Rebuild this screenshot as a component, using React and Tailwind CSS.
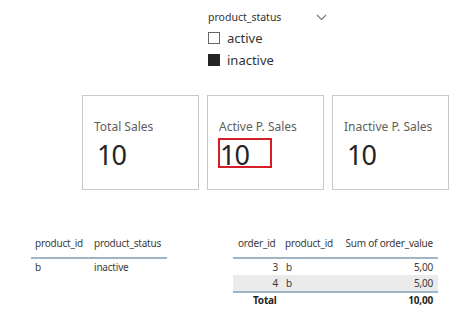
import React from 'react';

const font = { fontFamily: '"Noto Sans", "Open Sans", sans-serif' };

const cards = [
  { title: 'Total Sales', value: '10' },
  { title: 'Active P. Sales', value: '10', marked: true },
  { title: 'Inactive P. Sales', value: '10' },
];

const Chevron = () => (
  <svg width="11" height="7" viewBox="0 0 11 7">
    <path d="M1 1 L5.5 5.5 L10 1" fill="none" stroke="#777" strokeWidth="1.1" />
  </svg>
);

const Slicer = () => (
  <div className="ml-[208px] pt-[9px] w-[119px]">
    <div className="flex items-center justify-between h-[16px]">
      <span className="text-[10.5px] text-[#333] leading-none">product_status</span>
      <Chevron />
    </div>
    <div className="flex items-center gap-[7px] mt-[2px] h-[22px]">
      <span className="w-[12px] h-[12px] border border-[#666] bg-white" />
      <span className="text-[13px] text-[#333] leading-none">active</span>
    </div>
    <div className="flex items-center gap-[7px] h-[22px]">
      <span className="w-[12px] h-[12px] bg-[#252423]" />
      <span className="text-[13px] text-[#333] leading-none">inactive</span>
    </div>
  </div>
);

const Card = ({ title, value, marked }) => (
  <div className="w-[117px] h-[95px] border border-[#c8c8c8] bg-white pl-[11px] pt-[23px]">
    <div className="text-[12px] text-[#605e5c] leading-[16px]">{title}</div>
    <div className="mt-[3px]">
      {marked ? (
        <div className="border-2 border-[#d51f26] w-[54px] h-[30px] -ml-[1px] text-[27px] tracking-[-1px] leading-[30px] text-[#252423]">
          {value}
        </div>
      ) : (
        <div className="h-[30px] pl-[3px] pt-[2px] text-[27px] tracking-[-1px] leading-[30px] text-[#252423]">{value}</div>
      )}
    </div>
  </div>
);

const LeftTable = () => (
  <div className="w-[136px] ml-[31px] text-[10px] tracking-[-0.2px] text-[#3a3a3a]">
    <div className="flex h-[16px] items-center px-[4px]">
      <span className="w-[59px]">product_id</span>
      <span>product_status</span>
    </div>
    <div className="h-[6px] border-b-2 border-[#9fb4c4] box-content" />
    <div className="flex h-[16px] items-center px-[4px]">
      <span className="w-[59px]">b</span>
      <span>inactive</span>
    </div>
  </div>
);

const rows = [
  { id: '3', pid: 'b', sum: '5,00' },
  { id: '4', pid: 'b', sum: '5,00', alt: true },
];

const RightTable = () => (
  <div className="w-[205px] ml-[66px] text-[10px] tracking-[-0.2px] text-[#3a3a3a]">
    <div className="flex h-[16px] items-center px-[5px]">
      <span className="w-[47px]">order_id</span>
      <span className="w-[58px]">product_id</span>
      <span className="flex-1 text-right">Sum of order_value</span>
    </div>
    <div className="h-[6px] border-b-2 border-[#9fb4c4] box-content" />
    {rows.map((r) => (
      <div
        key={r.id}
        className={`flex h-[16px] items-center px-[5px] ${r.alt ? 'bg-[#ebebeb]' : ''}`}
      >
        <span className="w-[40px] text-right">{r.id}</span>
        <span className="w-[65px] pl-[8px]">{r.pid}</span>
        <span className="flex-1 text-right">{r.sum}</span>
      </div>
    ))}
    <div className="h-[2px] bg-[#9fb4c4]" />
    <div className="flex h-[15px] items-center px-[5px] font-bold text-[#252423]">
      <span className="w-[105px] pl-[15px]">Total</span>
      <span className="flex-1 text-right">10,00</span>
    </div>
  </div>
);

export default function App() {
  return (
    <div className="w-[474px] h-[326px] bg-white overflow-hidden" style={font}>
      <Slicer />
      <div className="flex gap-[8px] ml-[82px] mt-[24px]">
        {cards.map((c) => (
          <Card key={c.title} {...c} />
        ))}
      </div>
      <div className="flex mt-[45px]">
        <LeftTable />
        <RightTable />
      </div>
    </div>
  );
}
